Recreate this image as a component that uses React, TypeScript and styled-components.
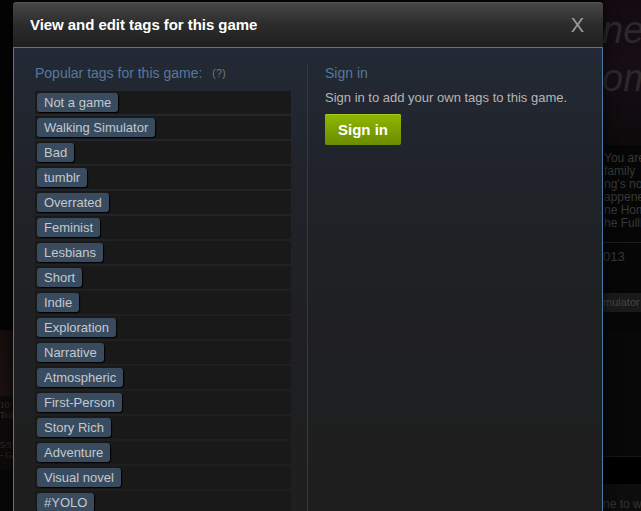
import React from "react";
import styled, { createGlobalStyle } from "styled-components";

const GlobalStyle = createGlobalStyle`
  html, body { margin: 0; padding: 0; background: #000; }
  body { font-family: "Liberation Sans", Arial, sans-serif; overflow: hidden; }
`;

const Page = styled.div`
  position: relative;
  width: 641px;
  height: 511px;
  overflow: hidden;
  background: #050505;
  display: flex;
  justify-content: space-between;
`;

const LeftStrip = styled.div`
  width: 13px;
  display: flex;
  flex-direction: column;
  background: #040404;
`;

const LeftBlock = styled.div<{ $h: number; $bg: string }>`
  height: ${(p) => p.$h}px;
  background: ${(p) => p.$bg};
  flex-shrink: 0;
`;

const LeftNote = styled.div<{ $h: number }>`
  height: ${(p) => p.$h}px;
  font-family: "Liberation Serif", serif;
  font-size: 9px;
  line-height: 10px;
  color: #3b3330;
  white-space: nowrap;
  overflow: hidden;
  padding-top: 4px;
  box-sizing: border-box;
  background: #0d0b0a;
`;

const RightStrip = styled.div`
  width: 38px;
  display: flex;
  flex-direction: column;
  overflow: hidden;
  background: #060606;
`;

const Banner = styled.div`
  height: 145px;
  background: linear-gradient(180deg, #140b11 0%, #170d14 50%, #0c0a0b 100%);
  display: flex;
  flex-direction: column;
  padding-top: 6px;
  box-sizing: border-box;
`;

const BannerWord = styled.div`
  font-family: "Liberation Sans", sans-serif;
  font-style: italic;
  font-size: 38px;
  line-height: 48px;
  color: #2d282c;
  white-space: nowrap;
  margin-left: -1px;
`;

const Para = styled.div`
  padding-top: 7px;
  font-size: 12px;
  line-height: 13px;
  color: #383838;
  white-space: nowrap;
  padding-left: 1px;
`;

const Rule = styled.div`
  height: 1px;
  background: #1e1e1e;
  margin-top: 12px;
`;

const DateText = styled.div`
  font-size: 13px;
  line-height: 16px;
  color: #363636;
  margin-top: 6px;
  white-space: nowrap;
`;

const BgTag = styled.div`
  margin-top: 28px;
  height: 19px;
  background: #1a1a1a;
  font-size: 11px;
  line-height: 19px;
  color: #444;
  white-space: nowrap;
`;

const DarkBox = styled.div`
  margin-top: 18px;
  height: 127px;
  background: #080808;
  border-bottom: 1px solid #161616;
`;

const BlackGap = styled.div`
  height: 27px;
  background: #000;
`;

const Footer = styled.div`
  flex: 1;
  background: #0d0d0d;
  font-size: 12px;
  line-height: 14px;
  color: #333;
  padding-top: 13px;
  white-space: nowrap;
`;

const Dialog = styled.div`
  position: absolute;
  top: 2px;
  left: 13px;
  width: 590px;
  bottom: -20px;
  display: flex;
  flex-direction: column;
  box-shadow: 0 0 12px rgba(0, 0, 0, 0.8);
`;

const Header = styled.div`
  height: 45px;
  flex-shrink: 0;
  display: flex;
  align-items: center;
  justify-content: space-between;
  padding: 0 19px 0 17px;
  border-radius: 4px 4px 0 0;
  background: linear-gradient(180deg, #474747 0%, #2c2c2c 50%, #1f1f1f 100%);
  box-shadow: inset 0 1px 0 #555;
`;

const Title = styled.div`
  font-size: 15px;
  font-weight: bold;
  color: #fff;
  letter-spacing: -0.05px;
`;

const Close = styled.div`
  font-size: 20px;
  line-height: 20px;
  color: #9c9c9c;
  cursor: pointer;
  margin-top: 1px;
`;

const Body = styled.div`
  flex: 1;
  border: 1px solid #4a79a9;
  border-bottom: none;
  background: linear-gradient(180deg, #232a35 0%, #20232a 120px, #1f2022 260px, #1e1e1e 100%);
  display: flex;
  padding: 16px 0 0 21px;
`;

const LeftCol = styled.div`
  width: 256px;
  padding-right: 16px;
  border-right: 1px solid #383838;
`;

const RightCol = styled.div`
  flex: 1;
  padding-left: 17px;
`;

const SectionTitle = styled.div`
  height: 18px;
  font-size: 14px;
  line-height: 18px;
  color: #55789e;
  display: flex;
  align-items: center;
  gap: 10px;
`;

const Help = styled.span`
  font-size: 10px;
  line-height: 12px;
  color: #7a7a7a;
  letter-spacing: 0.5px;
  margin-top: 1px;
`;

const TagList = styled.div`
  margin-top: 9px;
  display: flex;
  flex-direction: column;
  gap: 2px;
`;

const TagRow = styled.div`
  height: 23px;
  background: #191919;
  padding: 2px 0 0 2px;
  box-sizing: border-box;
`;

const Chip = styled.span`
  display: inline-block;
  height: 19px;
  box-sizing: border-box;
  padding: 1px 7px 0;
  line-height: 18px;
  font-size: 13px;
  color: #c3c8cd;
  background: #394c5f;
  border-radius: 3px;
  box-shadow: 1px 1px 1px #000;
  white-space: nowrap;
  vertical-align: top;
`;

const Info = styled.div`
  margin-top: 8px;
  font-size: 13px;
  line-height: 16px;
  color: #b6b6b6;
`;

const SignInButton = styled.button`
  display: block;
  margin-top: 8px;
  width: 76px;
  height: 31px;
  border: none;
  border-radius: 2px;
  background: linear-gradient(180deg, #8fb800 0%, #7ca100 50%, #6b8c00 100%);
  box-shadow: inset 0 1px 0 #a5cc1e;
  color: #fff;
  font-family: "Liberation Sans", Arial, sans-serif;
  font-weight: bold;
  font-size: 15px;
  padding: 0;
  cursor: pointer;
`;

const tags = [
  "Not a game",
  "Walking Simulator",
  "Bad",
  "tumblr",
  "Overrated",
  "Feminist",
  "Lesbians",
  "Short",
  "Indie",
  "Exploration",
  "Narrative",
  "Atmospheric",
  "First-Person",
  "Story Rich",
  "Adventure",
  "Visual novel",
  "#YOLO",
];

const paraLines = ["You are", "family", "ng's not", "appened", "ne Home", "he Fullbright"];

export default function App() {
  return (
    <>
      <GlobalStyle />
      <Page>
        <LeftStrip>
          <LeftBlock $h={330} $bg="#040404" />
          <LeftBlock $h={66} $bg="linear-gradient(180deg,#140e0d,#1a1210)" />
          <LeftNote $h={40}>10/14<br />Trilogy</LeftNote>
          <LeftNote $h={34}>5/5"<br />- Gam</LeftNote>
          <LeftBlock $h={41} $bg="#070707" />
        </LeftStrip>
        <RightStrip>
          <Banner>
            <BannerWord>ne</BannerWord>
            <BannerWord>om</BannerWord>
          </Banner>
          <Para>
            {paraLines.map((l) => (
              <div key={l}>{l}</div>
            ))}
          </Para>
          <Rule />
          <DateText>013</DateText>
          <BgTag>mulator</BgTag>
          <DarkBox />
          <BlackGap />
          <Footer>ne to w</Footer>
        </RightStrip>

        <Dialog>
          <Header>
            <Title>View and edit tags for this game</Title>
            <Close>X</Close>
          </Header>
          <Body>
            <LeftCol>
              <SectionTitle>
                Popular tags for this game: <Help>(?)</Help>
              </SectionTitle>
              <TagList>
                {tags.map((t) => (
                  <TagRow key={t}>
                    <Chip>{t}</Chip>
                  </TagRow>
                ))}
              </TagList>
            </LeftCol>
            <RightCol>
              <SectionTitle>Sign in</SectionTitle>
              <Info>Sign in to add your own tags to this game.</Info>
              <SignInButton>Sign in</SignInButton>
            </RightCol>
          </Body>
        </Dialog>
      </Page>
    </>
  );
}
